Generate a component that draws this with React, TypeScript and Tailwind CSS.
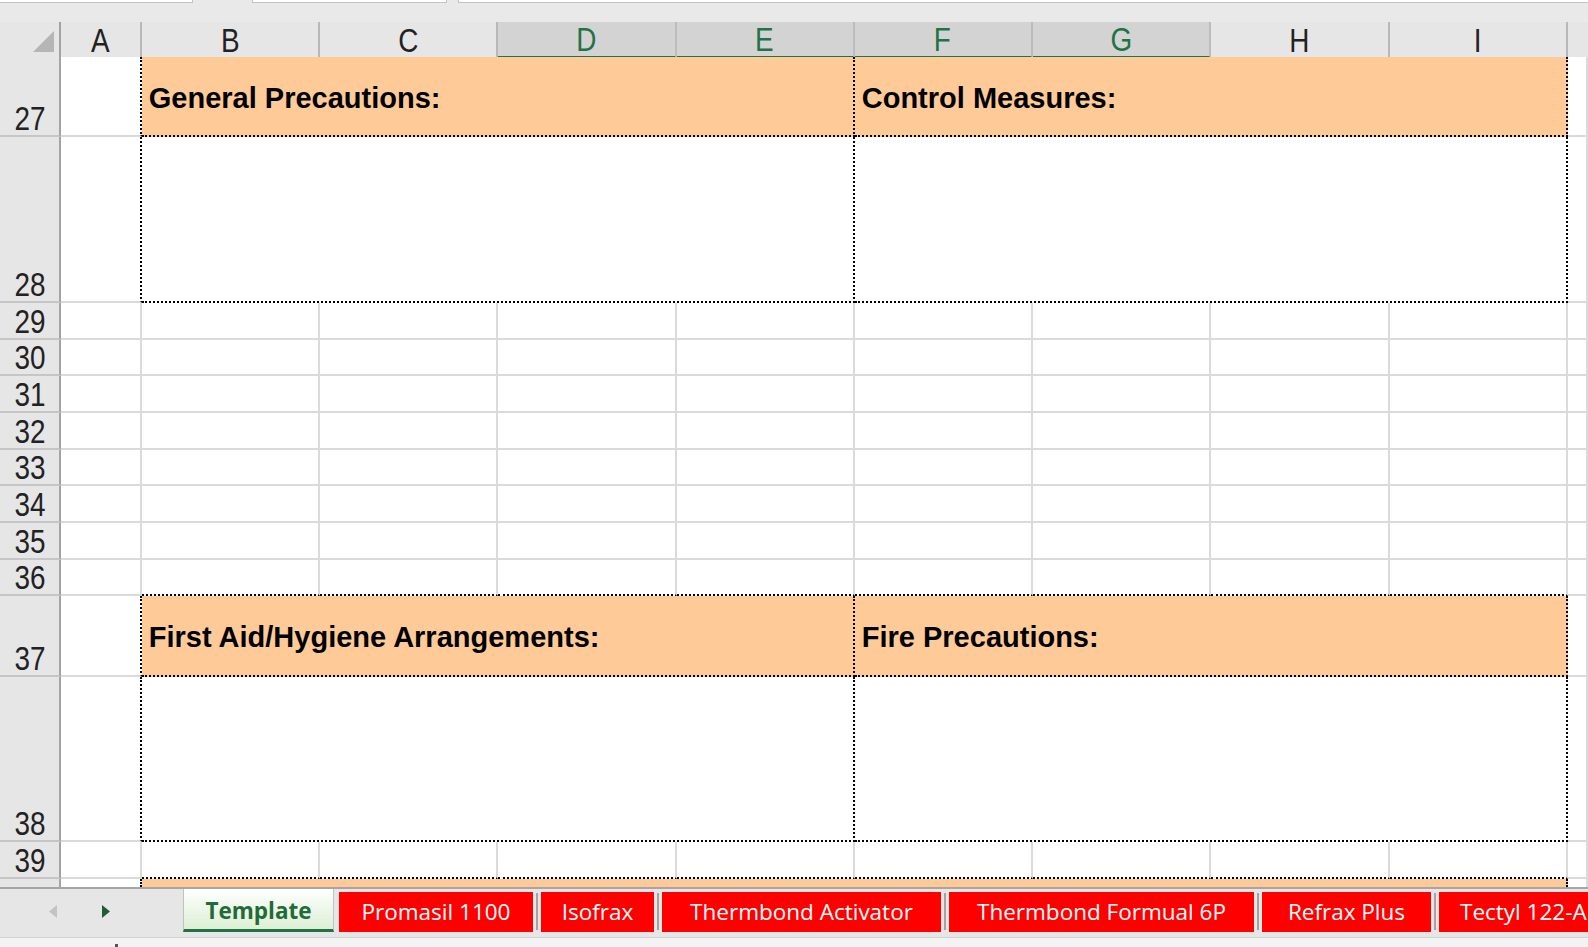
import React from "react";

const COLS = "grid grid-cols-[61px_80.75px_repeat(8,178.25px)_1fr]";

const RH =
  "bg-[#e6e6e6] border-r-2 border-r-[#a3a3a3] border-b-2 border-b-[#c6c6c6] flex items-end justify-center overflow-hidden text-[#222]";
const GRID = "border-r-2 border-b-2 border-[#dadada] bg-white";
const A_EDGE =
  "border-b-2 border-b-[#dadada] border-r-2 border-r-black [border-right-style:dotted] bg-white";
const A_EDGE_NB = "border-r-2 border-r-black [border-right-style:dotted] bg-white";
const M_ORANGE =
  "col-span-4 border-r-2 border-b-2 border-black border-dotted bg-[#fecb98] flex items-center pl-[7px] pt-[4px]";
const M_WHITE = "col-span-4 border-r-2 border-b-2 border-black border-dotted bg-white";
const DOT_B =
  "border-r-2 border-r-[#dadada] border-b-2 border-b-black [border-bottom-style:dotted] bg-white";

function Num({ n }: { n: number }) {
  return <span className="inline-block scale-x-[0.82] text-[34px] leading-none">{n}</span>;
}

function Label({ t }: { t: string }) {
  return (
    <span className="text-[29px] font-bold leading-none text-black whitespace-nowrap">{t}</span>
  );
}

function PlainRow({ n, dotted }: { n: number; dotted?: boolean }) {
  const c = dotted ? DOT_B : GRID;
  return (
    <div className={`${COLS} h-[36.7px]`}>
      <div className={RH}>
        <Num n={n} />
      </div>
      <div className={GRID} />
      <div className={c} />
      <div className={c} />
      <div className={c} />
      <div className={c} />
      <div className={c} />
      <div className={c} />
      <div className={c} />
      <div className={c} />
      <div className={GRID} />
    </div>
  );
}

function HeaderRows({
  n1,
  n2,
  left,
  right,
  h1,
  h2,
}: {
  n1: number;
  n2: number;
  left: string;
  right: string;
  h1: string;
  h2: string;
}) {
  return (
    <>
      <div className={`${COLS} ${h1}`}>
        <div className={RH}>
          <Num n={n1} />
        </div>
        <div className={A_EDGE} />
        <div className={M_ORANGE}>
          <Label t={left} />
        </div>
        <div className={M_ORANGE}>
          <Label t={right} />
        </div>
        <div className={GRID} />
      </div>
      <div className={`${COLS} ${h2}`}>
        <div className={RH}>
          <Num n={n2} />
        </div>
        <div className={A_EDGE} />
        <div className={M_WHITE} />
        <div className={M_WHITE} />
        <div className={GRID} />
      </div>
    </>
  );
}

const HN =
  "flex items-center justify-center bg-[#e6e6e6] border-r-2 border-r-[#b8b8b8] border-b-2 border-b-[#ababab] text-[#222]";
const HS =
  "flex items-center justify-center bg-[#d3d3d3] border-r-2 border-r-[#bcbcbc] border-b-[3px] border-b-[#217346] text-[#217346]";

function ColHead({ l, sel }: { l: string; sel?: boolean }) {
  return (
    <div className={sel ? HS : HN}>
      <span className="inline-block scale-x-[0.82] text-[34px] leading-none">{l}</span>
    </div>
  );
}

function RedTab({ t, w }: { t: string; w: string }) {
  return (
    <div
      className={`${w} shrink-0 h-[40px] mt-[3px] bg-[#ff0000] text-white flex items-center justify-center text-[22.5px] whitespace-nowrap`}
    >
      {t}
    </div>
  );
}

function Sep() {
  return (
    <div className="w-[8px] shrink-0 flex justify-center mt-[4px]">
      <div className="w-[2px] h-[37px] bg-[#a3a3a3]" />
    </div>
  );
}

export default function App() {
  return (
    <div className="w-[1588px] h-[947px] overflow-hidden bg-white font-['Liberation_Sans',Arial,sans-serif]">
      {/* top formula bar remnants */}
      <div className="h-[22px] bg-[#e9e9e9] flex items-start">
        <div className="w-[193px] h-[3px] bg-white border-b border-r border-[#c3c3c3]" />
        <div className="ml-[59px] w-[195px] h-[3px] bg-white border-b border-x border-[#c3c3c3]" />
        <div className="ml-[11px] flex-1 h-[3px] bg-white border-b border-l border-[#c3c3c3]" />
      </div>

      {/* column headers */}
      <div className={`${COLS} h-[35.3px]`}>
        <div className="bg-[#e6e6e6] border-r-2 border-r-[#a3a3a3] border-b-2 border-b-[#ababab] flex items-end justify-end pr-[5px] pb-[5px]">
          <svg width="21" height="21" viewBox="0 0 21 21">
            <polygon points="21,0 21,21 0,21" fill="#b5b5b5" />
          </svg>
        </div>
        <ColHead l="A" />
        <ColHead l="B" />
        <ColHead l="C" />
        <ColHead l="D" sel />
        <ColHead l="E" sel />
        <ColHead l="F" sel />
        <ColHead l="G" sel />
        <ColHead l="H" />
        <ColHead l="I" />
        <div className="bg-[#e6e6e6] border-b-2 border-b-[#ababab]" />
      </div>

      <HeaderRows
        n1={27}
        n2={28}
        left="General Precautions:"
        right="Control Measures:"
        h1="h-[80px]"
        h2="h-[165.7px]"
      />
      <PlainRow n={29} />
      <PlainRow n={30} />
      <PlainRow n={31} />
      <PlainRow n={32} />
      <PlainRow n={33} />
      <PlainRow n={34} />
      <PlainRow n={35} />
      <PlainRow n={36} dotted />
      <HeaderRows
        n1={37}
        n2={38}
        left="First Aid/Hygiene Arrangements:"
        right="Fire Precautions:"
        h1="h-[80.6px]"
        h2="h-[165.4px]"
      />
      <PlainRow n={39} dotted />

      {/* row 40 partial */}
      <div className={`${COLS} h-[7.4px]`}>
        <div className="bg-[#e6e6e6] border-r-2 border-r-[#a3a3a3]" />
        <div className={A_EDGE_NB} />
        <div className="col-span-8 bg-[#fecb98] border-r-2 border-black border-dotted" />
        <div className="border-r-2 border-[#dadada] bg-white" />
      </div>

      {/* sheet tabs */}
      <div className="h-[50.3px] bg-[#e6e6e6] border-t-2 border-t-[#a6a6a6] flex items-start overflow-hidden font-['Open_Sans',sans-serif]">
        <div className="w-[183px] shrink-0 h-full relative">
          <svg
            className="absolute left-[48px] top-[16px]"
            width="9"
            height="13"
            viewBox="0 0 9 13"
          >
            <polygon points="9,0 9,13 1,6.5" fill="#c3c3c3" />
          </svg>
          <svg
            className="absolute left-[102px] top-[16px]"
            width="9"
            height="13"
            viewBox="0 0 9 13"
          >
            <polygon points="0,0 8,6.5 0,13" fill="#1e5e36" />
          </svg>
        </div>
        <div className="w-[151px] shrink-0 h-[43.3px] bg-linear-to-b from-white to-[#dcefd4] border-x border-x-[#c2c2c2] border-b-[3px] border-b-[#217346] flex items-center justify-center pt-[4px] text-[22.5px] font-bold text-[#1f6b3a]">
          Template
        </div>
        <div className="w-[5px] shrink-0" />
        <RedTab t="Promasil 1100" w="w-[194px]" />
        <Sep />
        <RedTab t="Isofrax" w="w-[113px]" />
        <Sep />
        <RedTab t="Thermbond Activator" w="w-[279px]" />
        <Sep />
        <RedTab t="Thermbond Formual 6P" w="w-[305px]" />
        <Sep />
        <RedTab t="Refrax Plus" w="w-[169px]" />
        <Sep />
        <div className="w-[240px] shrink-0 h-[40px] mt-[3px] bg-[#ff0000] text-white flex items-center pl-[21px] text-[22.5px] whitespace-nowrap">
          Tectyl 122-A
        </div>
      </div>

      {/* status bar remnant */}
      <div className="h-[10px] bg-[#f3f3f3] border-t border-t-[#d4d4d4] flex items-start">
        <div className="ml-[115px] mt-[6px] w-[3px] h-[3px] bg-[#555]" />
      </div>
    </div>
  );
}
